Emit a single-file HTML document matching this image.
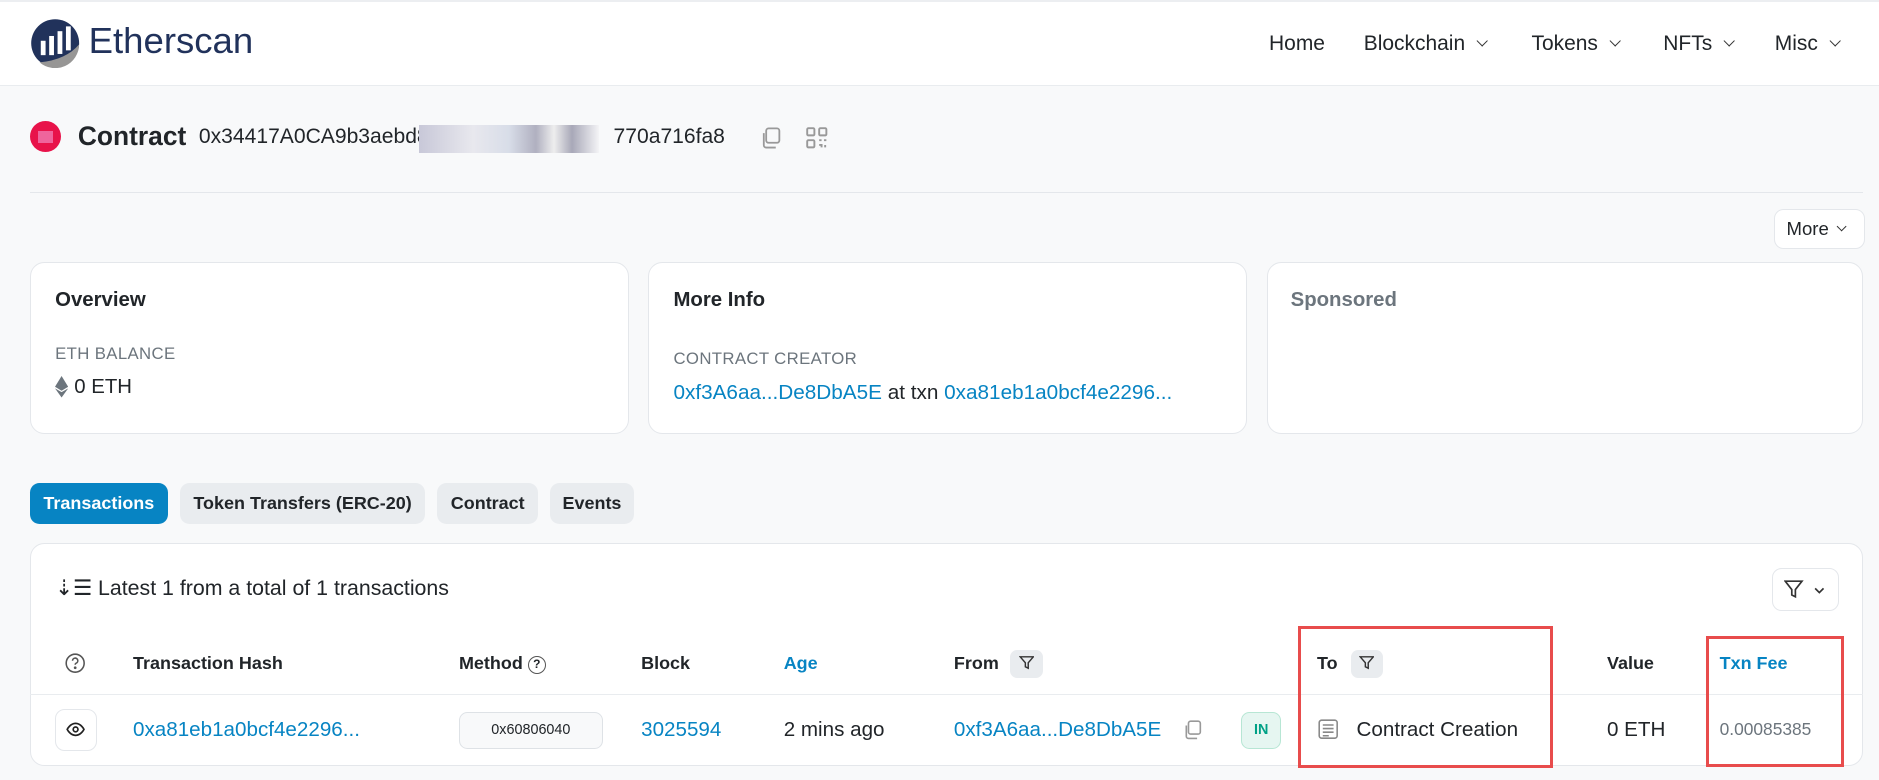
<!DOCTYPE html>
<html><head><meta charset="utf-8"><style>
*{margin:0;padding:0;box-sizing:border-box}
html,body{width:1879px;height:780px;overflow:hidden;background:#f8f9fa}
#w{zoom:1.19834;position:relative;width:1568px;height:651px;font-family:"Liberation Sans",sans-serif;color:#212529}
.a{position:absolute;white-space:nowrap}
.card{position:absolute;background:#fff;border:1px solid #e4e7eb;border-radius:12px}
.blue{color:#0784c3}
.nav{font-size:17.5px;top:27px}
.chev{display:inline-block;width:7px;height:7px;border-right:1.6px solid #333;border-bottom:1.6px solid #333;transform:rotate(45deg);margin-left:11px;position:relative;top:-4px}
.tab{position:absolute;top:403px;height:34px;border-radius:8px;font-size:15px;font-weight:bold;line-height:34px;text-align:center;background:#e9ecef;color:#212529}
.th{font-size:15px;font-weight:bold;top:545px}
.td{font-size:17.2px;top:599px}
.fbox{position:absolute;width:27px;height:24px;background:#e9ecef;border-radius:6px}
</style></head><body><div id="w">
<div class="a" style="left:0;top:0;width:1568px;height:72px;background:#fff;border-top:2px solid #eceef1;border-bottom:1px solid #e9ecef"></div>
<svg class="a" style="left:25px;top:15px" width="42" height="42" viewBox="0 0 42 42"><circle cx="21" cy="21" r="20" fill="#21325b"/><path d="M41 22 A20 20 0 0 1 8 37 Q30 35 41 22Z" fill="#979695"/><rect x="9" y="19" width="4" height="12" fill="#fff"/><rect x="16" y="15" width="4" height="16" fill="#fff"/><rect x="23" y="11" width="4" height="19" fill="#fff"/><rect x="30" y="7" width="4" height="20" fill="#fff"/></svg>
<div class="a" style="left:74px;top:17px;font-size:30.5px;color:#21325b">Etherscan</div>
<div class="a nav" style="left:1059px">Home</div>
<div class="a nav" style="left:1138px">Blockchain<span class="chev"></span></div>
<div class="a nav" style="left:1278px">Tokens<span class="chev"></span></div>
<div class="a nav" style="left:1388px">NFTs<span class="chev"></span></div>
<div class="a nav" style="left:1481px">Misc<span class="chev"></span></div>

<div class="a" style="left:25px;top:101px;width:26px;height:26px;border-radius:50%;background:#e8134a;overflow:hidden"><div style="margin:8px 0 0 7px;width:12px;height:10px;background:#f07ab0;opacity:.8"></div></div>
<div class="a" style="left:65px;top:101px;font-size:22px;font-weight:bold">Contract</div>
<div class="a" style="left:166px;top:104px;font-size:17.6px">0x34417A0CA9b3aebd8</div>
<div class="a" style="left:350px;top:104px;width:150px;height:24px;background:linear-gradient(90deg,#c8c8d8,#e8e8ee 30%,#d8dde8 50%,#b0b0c0 65%,#eee 75%,#a8a8b8 85%,#f4f4f6)"></div>
<div class="a" style="left:512px;top:104px;font-size:17.6px">770a716fa8</div>
<svg class="a" style="left:633px;top:105px" width="20" height="20" viewBox="0 0 20 20" fill="none" stroke="#999" stroke-width="1.5"><rect x="6" y="2" width="11" height="12" rx="2"/><path d="M4 6v10a2 2 0 0 0 2 2h8"/></svg>
<svg class="a" style="left:673px;top:106px" width="18" height="18" viewBox="0 0 18 18" fill="none" stroke="#999" stroke-width="1.6"><rect x="1" y="1" width="6" height="6" rx="1"/><rect x="11" y="1" width="6" height="6" rx="1"/><rect x="1" y="11" width="6" height="6" rx="1"/><path d="M11 11h2M15 11h2M11 15h2v2M16 15v2"/></svg>
<div class="a" style="left:25px;top:160px;width:1530px;height:1px;background:#e4e7eb"></div>
<div class="card" style="left:1480px;top:174px;width:76px;height:34px;border-radius:8px;font-size:15.5px;padding:7px 0 0 10px">More<span class="chev" style="width:6px;height:6px;border-width:1.3px;margin-left:8px"></span></div>

<div class="card" style="left:25px;top:219px;width:500px;height:143px"></div>
<div class="card" style="left:541px;top:219px;width:500px;height:143px"></div>
<div class="card" style="left:1057px;top:219px;width:498px;height:143px"></div>
<div class="a" style="left:46px;top:241px;font-size:17px;font-weight:bold">Overview</div>
<div class="a" style="left:46px;top:287px;font-size:14px;color:#6c757d;letter-spacing:.3px">ETH BALANCE</div>
<svg class="a" style="left:46px;top:314px" width="11" height="18" viewBox="0 0 11 18"><path d="M5.5 0L0 9l5.5 3.3L11 9z" fill="#6c757d"/><path d="M5.5 13.5L0 10.3 5.5 18 11 10.3z" fill="#6c757d"/></svg>
<div class="a" style="left:62px;top:314px;font-size:17px">0 ETH</div>
<div class="a" style="left:562px;top:241px;font-size:17px;font-weight:bold">More Info</div>
<div class="a" style="left:562px;top:291px;font-size:14px;color:#6c757d;letter-spacing:.3px">CONTRACT CREATOR</div>
<div class="a" style="left:562px;top:318px;font-size:17.3px"><span class="blue">0xf3A6aa...De8DbA5E</span> at txn <span class="blue">0xa81eb1a0bcf4e2296...</span></div>
<div class="a" style="left:1077px;top:241px;font-size:17px;font-weight:bold;color:#6c757d">Sponsored</div>

<div class="tab" style="left:25px;width:115px;background:#0784c3;color:#fff">Transactions</div>
<div class="tab" style="left:150px;width:205px">Token Transfers (ERC-20)</div>
<div class="tab" style="left:365px;width:84px">Contract</div>
<div class="tab" style="left:459px;width:70px">Events</div>

<div class="card" style="left:25px;top:453px;width:1530px;height:186px"></div>
<div class="a" style="left:46px;top:481px;font-size:17.8px">⇣☰ Latest 1 from a total of 1 transactions</div>
<div class="card" style="left:1479px;top:474px;width:56px;height:36px;border-radius:8px"></div>
<svg class="a" style="left:1489px;top:484px" width="36" height="16" viewBox="0 0 36 16" fill="none" stroke="#333" stroke-width="1.4"><path d="M1 1h14l-5.5 7v6l-3-1.5V8z"/><path d="M26 7l3.5 3.5L33 7"/></svg>
<div class="a" style="left:25px;top:579px;width:1530px;height:1px;background:#e9ecef"></div>

<svg class="a" style="left:54px;top:545px" width="17" height="17" viewBox="0 0 17 17" fill="none" stroke="#555" stroke-width="1.3"><circle cx="8.5" cy="8.5" r="7.5"/><path d="M6.3 6.5a2.2 2.2 0 1 1 3 2c-.6.3-.8.7-.8 1.3"/><circle cx="8.5" cy="12.3" r=".5" fill="#555"/></svg>
<div class="a th" style="left:111px">Transaction Hash</div>
<div class="a th" style="left:383px">Method <span style="display:inline-block;width:15px;height:15px;border:1.3px solid #555;border-radius:50%;font-size:10px;text-align:center;line-height:13px;vertical-align:1px">?</span></div>
<div class="a th" style="left:535px">Block</div>
<div class="a th blue" style="left:654px">Age</div>
<div class="a th" style="left:796px">From</div>
<div class="fbox" style="left:843px;top:542px"></div>
<div class="a th" style="left:1099px">To</div>
<div class="fbox" style="left:1127px;top:542px"></div>
<svg class="a" style="left:850px;top:547px" width="13" height="13" viewBox="0 0 13 13" fill="none" stroke="#333" stroke-width="1.2"><path d="M1 1.5h11l-4.3 5v4.5l-2.4-1.2V6.5z"/></svg>
<svg class="a" style="left:1134px;top:547px" width="13" height="13" viewBox="0 0 13 13" fill="none" stroke="#333" stroke-width="1.2"><path d="M1 1.5h11l-4.3 5v4.5l-2.4-1.2V6.5z"/></svg>
<div class="a th" style="left:1341px">Value</div>
<div class="a th blue" style="left:1435px">Txn Fee</div>

<div class="card" style="left:46px;top:592px;width:35px;height:35px;border-radius:8px"></div>
<svg class="a" style="left:55px;top:602px" width="16" height="14" viewBox="0 0 16 14" fill="none" stroke="#222" stroke-width="1.4"><path d="M1 7s2.5-5 7-5 7 5 7 5-2.5 5-7 5-7-5-7-5z"/><circle cx="8" cy="7" r="2"/></svg>
<div class="a td blue" style="left:111px">0xa81eb1a0bcf4e2296...</div>
<div class="a" style="left:383px;top:594px;width:120px;height:31px;background:#f8f9fa;border:1px solid #dee2e6;border-radius:7px;font-size:12px;text-align:center;line-height:29px">0x60806040</div>
<div class="a td blue" style="left:535px">3025594</div>
<div class="a td" style="left:654px">2 mins ago</div>
<div class="a td blue" style="left:796px">0xf3A6aa...De8DbA5E</div>
<svg class="a" style="left:986px;top:600px" width="18" height="18" viewBox="0 0 20 20" fill="none" stroke="#999" stroke-width="1.5"><rect x="6" y="2" width="11" height="12" rx="2"/><path d="M4 6v10a2 2 0 0 0 2 2h8"/></svg>
<div class="a" style="left:1036px;top:594px;width:33px;height:31px;background:#e6f6f1;border:1px solid #b7e6d4;border-radius:7px;color:#00a186;font-size:12px;font-weight:bold;text-align:center;line-height:29px">IN</div>
<svg class="a" style="left:1100px;top:600px" width="17" height="17" viewBox="0 0 17 17" fill="none" stroke="#888" stroke-width="1.3"><rect x="1" y="1" width="15" height="15" rx="2"/><path d="M4 5h9M4 8h9M4 11h9M4 14h5"/></svg>
<div class="a td" style="left:1132px">Contract Creation</div>
<div class="a td" style="left:1341px">0 ETH</div>
<div class="a" style="left:1435px;top:600px;font-size:14.5px;color:#6c757d">0.00085385</div>

<div class="a" style="left:1083px;top:522px;width:213px;height:119px;border:3px solid #e84c4c"></div>
<div class="a" style="left:1424px;top:531px;width:115px;height:109px;border:3px solid #e84c4c"></div>
</div></body></html>
